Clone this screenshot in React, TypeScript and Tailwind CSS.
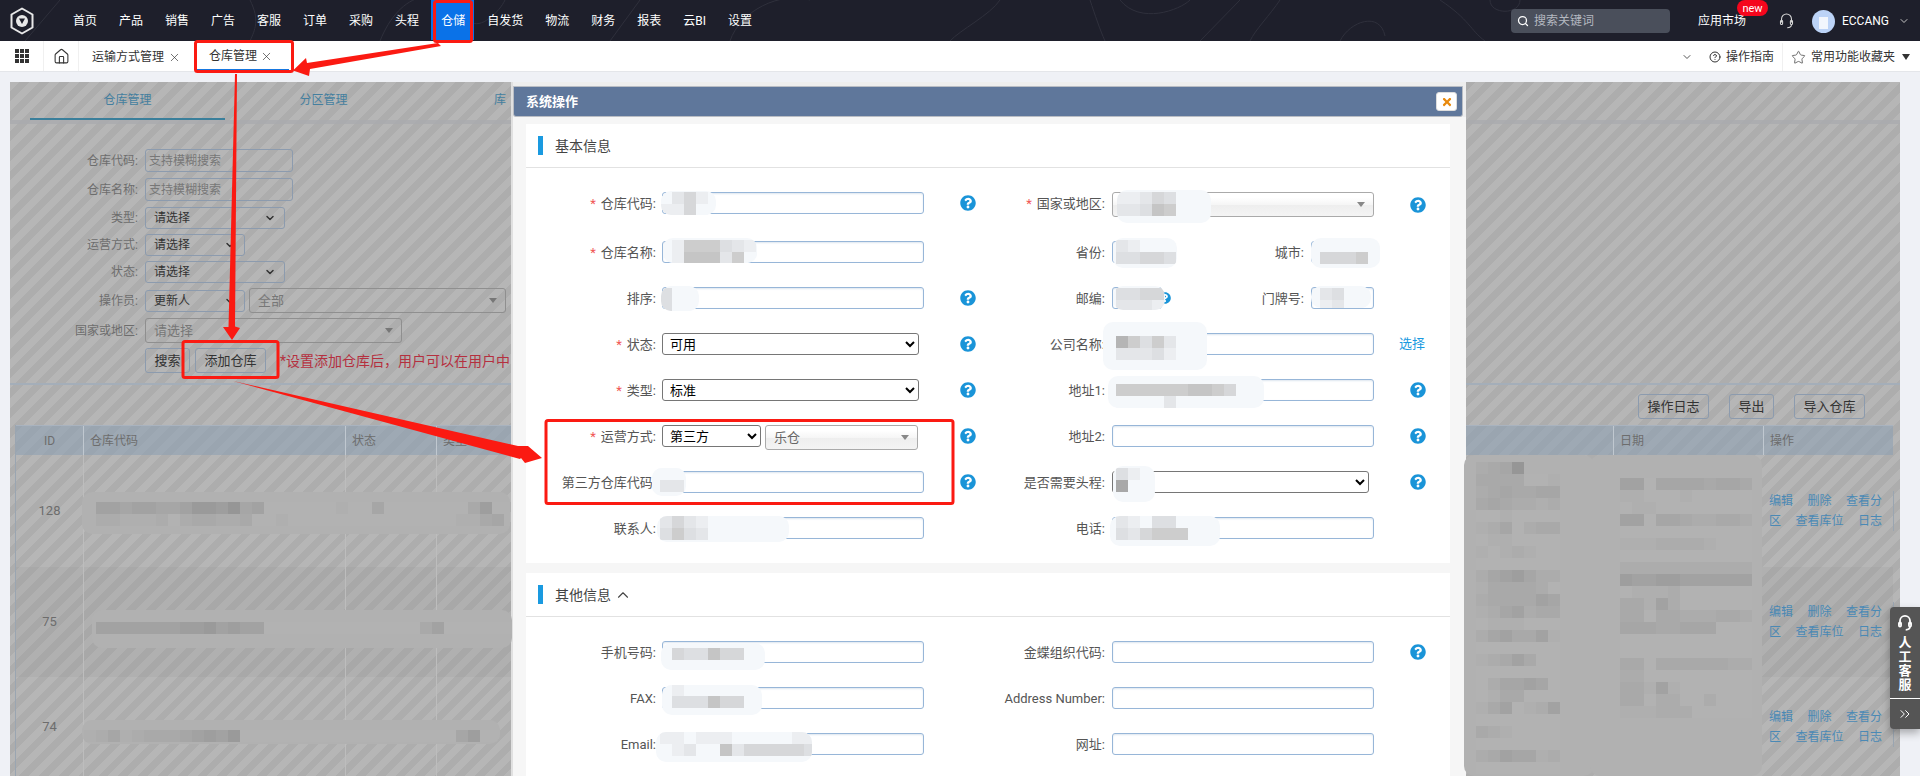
import { ChevronDown, ChevronUp, ChevronsRight, CircleHelp, Home, Search, Star, X } from "lucide-react";
import type { ReactNode } from "react";
import { FaQuestionCircle, FaTimes } from "react-icons/fa";

const navItems = ["首页", "产品", "销售", "广告", "客服", "订单", "采购", "头程", "仓储", "自发货", "物流", "财务", "报表", "云BI", "设置"];

const lightShades = ["#f5f8fb", "#eceef1", "#e4e6e9", "#dddfe2", "#d6d7d9", "#cdcdcd", "#c5c5c5", "#b5b5b5", "#a8a8a8"];
const darkShades = ["#b2b2b2", "#afafaf", "#acacac", "#a9a9a9", "#a6a6a6", "#a2a2a2", "#9e9e9e", "#9a9a9a", "#969696"];

type Patch = {
  x: number;
  y: number;
  w: number;
  h: number;
  base?: string;
  dark?: boolean;
  gridX: number;
  gridY: number;
  rows: string[];
};

// blurred out values, the cells sit on the 12px mosaic of the source picture
const patches: Patch[] = [
  { x: 661, y: 191, w: 55, h: 24, gridX: 660, gridY: 192, rows: ["0241", "1140."] },
  { x: 663, y: 238, w: 94, h: 25, gridX: 660, gridY: 240, rows: ["015553210", "016662500"] },
  { x: 661, y: 286, w: 38, h: 25, gridX: 660, gridY: 288, rows: ["300", "300"] },
  { x: 652, y: 468, w: 34, h: 28, gridX: 648, gridY: 468, rows: ["000", "022"] },
  { x: 657, y: 516, w: 132, h: 26, gridX: 660, gridY: 516, rows: ["2421", "3532"] },
  { x: 661, y: 643, w: 104, h: 27, gridX: 672, gridY: 648, rows: ["433644", "000000"] },
  { x: 662, y: 685, w: 100, h: 30, gridX: 660, gridY: 684, rows: ["01000", "033364400"] },
  { x: 656, y: 732, w: 156, h: 30, gridX: 660, gridY: 732, rows: ["1101110000011", "0120062444443"] },
  { x: 1117, y: 190, w: 94, h: 33, gridX: 1116, gridY: 192, rows: ["11243", "22365"] },
  { x: 1113, y: 238, w: 64, h: 30, gridX: 1116, gridY: 240, rows: ["21000", "33443"] },
  { x: 1311, y: 238, w: 69, h: 30, gridX: 1320, gridY: 240, rows: ["00000", "44450"] },
  { x: 1113, y: 286, w: 52, h: 24, gridX: 1116, gridY: 288, rows: ["3344", "2221"] },
  { x: 1311, y: 286, w: 60, h: 22, gridX: 1320, gridY: 288, rows: ["2300", "1200"] },
  { x: 1103, y: 322, w: 104, h: 48, gridX: 1116, gridY: 336, rows: ["75352", "22231"] },
  { x: 1108, y: 376, w: 156, h: 32, gridX: 1116, gridY: 384, rows: ["5555556654", "0000200000"] },
  { x: 1113, y: 466, w: 42, h: 36, gridX: 1116, gridY: 468, rows: ["31", "80"] },
  { x: 1110, y: 516, w: 110, h: 30, gridX: 1116, gridY: 516, rows: ["21033", "324555"] },
  { x: 82, y: 492, w: 428, h: 42, dark: true, gridX: 96, gridY: 502, rows: ["5545544577684500000010040000000360000000", "2211120233223001000000000000001134002"] },
  { x: 92, y: 610, w: 420, h: 38, dark: true, gridX: 96, gridY: 622, rows: ["55555556675655000000000000035000000355660"] },
  { x: 82, y: 720, w: 418, h: 24, dark: true, gridX: 84, gridY: 730, rows: ["1241233345657000000000000000000460000006784"] },
  {
    x: 1464, y: 455, w: 130, h: 321, dark: true, base: "#b1b1b1", gridX: 1476, gridY: 462,
    rows: ["2348", "3333001", "2343344", "3432212", "0010000", "1240233", "0110000", "1012100", "0000000", "2456422", "1333320", "2333354", "1245233", "0111000", "2453351", "0000000", "1235300", "0000000", "0244540", "0133000", "1350125", "0000000", "3210000", "0000000", "2354412", "0000000"],
  },
  {
    x: 1590, y: 455, w: 172, h: 321, dark: true, base: "#b1b1b1", gridX: 1620, gridY: 478,
    rows: ["55044443443", "11000100000", "01100000000", "55044322332", "00000000000", "11122221000", "00000000000", "22222222222", "65566555555", "01112000000", "33152000000", "33033222332", "44433444000", "00000000000", "00000000000", "33033333322", "22000000000", "33151000000", "33022002000", "11122200000"],
  },
];

function Patches() {
  return (
    <>
      {patches.map((patch, index) => (
        <div
          key={index}
          className="absolute overflow-hidden rounded-[10px]"
          style={{ left: patch.x, top: patch.y, width: patch.w, height: patch.h, background: patch.base ?? (patch.dark ? "#b1b1b1" : "#f5f8fb") }}
        >
          {patch.rows.map((row, rowIndex) =>
            row.split("").map((cell, cellIndex) => (
              <div
                key={`${rowIndex}-${cellIndex}`}
                className="absolute h-3 w-3"
                style={{
                  left: patch.gridX + cellIndex * 12 - patch.x,
                  top: patch.gridY + rowIndex * 12 - patch.y,
                  background: (patch.dark ? darkShades : lightShades)[Number(cell)],
                }}
              />
            )),
          )}
        </div>
      ))}
    </>
  );
}

function Logo() {
  return (
    <svg width="24" height="28" viewBox="0 0 24 28" fill="none">
      <path d="M12 1.500 22.500 7.500v13L12 26.500 1.500 20.500v-13z" stroke="#e8e8e8" strokeWidth="2" strokeLinejoin="round" />
      <circle cx="12" cy="14" r="6" fill="#e8e8e8" />
      <path d="M9 11.500h6l-3 5.500z" fill="#1e1f2b" />
    </svg>
  );
}

function Headset({ className, stroke = 2 }: { className: string; stroke?: number }) {
  return (
    <svg className={className} viewBox="0 0 24 28" fill="none" stroke="currentColor" strokeWidth={stroke}>
      <path d="M5 16v-5a7 7 0 0 1 14 0v5" />
      <rect x="3.500" y="13" width="3" height="6" rx="1.500" />
      <rect x="17.500" y="13" width="3" height="6" rx="1.500" />
      <path d="M19 19c0 3-2.500 4.500-6 4.500" />
    </svg>
  );
}

function TopBar() {
  return (
    <header className="relative flex h-[41px] shrink-0 items-center overflow-hidden bg-[#1e1f2b] pt-px text-xs text-white">
      <svg className="absolute left-0 top-0" width="1920" height="41" fill="none" stroke="#2f303c" strokeWidth="1">
        <path d="M60 0 25 41M250 0c10 20 5 30 0 41M380 41c20-50 60-60 90-20 10 10 30-10 35-21M640 0 610 41M730 41c10-30 50-50 80-41M1000 0c-10 15-40 30-50 41M1090 0c5 15 10 30 15 41M1120 0c20 25 60 10 70-0M1240 0l-40 41M1280 0c-10 15-25 30-30 41M1340 41c10-20 40-30 45-5M1440 0c30 20 30 30 45 41M1490 0c0 15 30 15 30 0" />
      </svg>
      <div className="relative ml-[10px]">
        <Logo />
      </div>
      <nav className="relative ml-[39px] flex h-full items-center gap-[22px]">
        {navItems.map((item) => (
          <span key={item} className={`relative ${item === "仓储" ? "z-0" : ""}`}>
            {item === "仓储" && <span className="absolute -left-[10px] -right-[9px] -top-[14px] -z-10 h-[41px] bg-[#0a72e8]" />}
            {item}
          </span>
        ))}
      </nav>
      <div className="relative ml-auto flex items-center">
        <div className="flex h-6 w-[159px] items-center gap-[5px] rounded-sm bg-[#4a4f5b] pl-[6px] text-[#b4b8c0]">
          <Search className="h-3 w-3 text-white" strokeWidth={2.5} />
          搜索关键词
        </div>
        <div className="relative ml-7 mr-[32px]">
          应用市场
          <span className="absolute -right-[22px] -top-[13px] flex h-4 w-[31px] items-center justify-center rounded-full bg-[#f5061d] text-[11px] leading-none">new</span>
        </div>
        <Headset className="h-[20px] w-[17px] text-[#d8d8d8]" stroke={1.5} />
        <div className="ml-[17px] flex h-[23px] w-[23px] items-end justify-center rounded-full bg-[#bcd3f7] pb-1">
          <div className="h-[12px] w-[9px] bg-white/80" />
        </div>
        <span className="ml-[7px]">ECCANG</span>
        <ChevronDown className="ml-[9px] mr-[10px] h-3 w-3 text-[#c4c4c4]" />
      </div>
    </header>
  );
}

function TabBar() {
  return (
    <div className="flex h-[31px] shrink-0 items-center border-b border-[#e4e6ea] bg-white text-xs text-[#333]">
      <div className="flex h-full w-[44px] items-center justify-center border-r border-[#f0f0f0]">
        <div className="grid grid-cols-3 gap-px">
          {Array.from({ length: 9 }).map((_, index) => (
            <span key={index} className="h-1 w-1 bg-[#333]" />
          ))}
        </div>
      </div>
      <div className="flex h-full w-[35px] items-center justify-center border-r border-[#f0f0f0]">
        <Home className="h-[17px] w-[17px]" strokeWidth={1.5} />
      </div>
      <span className="ml-[13px] pt-[2px]">运输方式管理</span>
      <X className="ml-[4px] mt-[2px] h-[13px] w-[13px]" strokeWidth={1.25} />
      <div className="ml-[16px] flex h-full w-[92px] items-center border-b-2 border-[#1677e0] pl-3 pt-[2px]">
        仓库管理
        <X className="ml-[3px] h-[13px] w-[13px]" strokeWidth={1.25} />
      </div>
      <div className="ml-auto flex h-full items-center pt-[2px]">
        <ChevronDown className="h-3 w-3 text-[#555]" />
        <CircleHelp className="ml-[16px] h-3 w-3" />
        <span className="ml-[5px]">操作指南</span>
        <div className="ml-2 flex h-full items-center border-l border-[#f0f0f0] pl-2">
          <Star className="h-[15px] w-[15px] text-[#666]" strokeWidth={1.5} />
          <span className="ml-[5px]">常用功能收藏夹</span>
          <span className="ml-[7px] mr-[10px] border-x-[4px] border-t-[6px] border-x-transparent border-t-[#333]" />
        </div>
      </div>
    </div>
  );
}

function Ghost({ className, children }: { className: string; children?: ReactNode }) {
  return <div className={`flex items-center rounded-[3px] border border-[#8c9bae] ${className}`}>{children}</div>;
}

function BackForm() {
  const rows: { label: string; mb: string; control: ReactNode }[] = [
    { label: "仓库代码:", mb: "mb-[6px]", control: <Ghost className="h-[23px] w-[148px] pl-[3px] text-[#777]">支持模糊搜索</Ghost> },
    { label: "仓库名称:", mb: "mb-[6px]", control: <Ghost className="h-[23px] w-[148px] pl-[3px] text-[#777]">支持模糊搜索</Ghost> },
    { label: "类型:", mb: "mb-[5px]", control: <Ghost className="h-[22px] w-[140px] justify-between px-2 text-[#333]">请选择<ChevronDown className="h-3 w-3" strokeWidth={3} /></Ghost> },
    { label: "运营方式:", mb: "mb-[5px]", control: <Ghost className="h-[22px] w-[100px] justify-between px-2 text-[#333]">请选择<ChevronDown className="h-3 w-3" strokeWidth={3} /></Ghost> },
    { label: "状态:", mb: "mb-[5px]", control: <Ghost className="h-[22px] w-[140px] justify-between px-2 text-[#333]">请选择<ChevronDown className="h-3 w-3" strokeWidth={3} /></Ghost> },
    {
      label: "操作员:",
      mb: "mb-[5px]",
      control: (
        <div className="flex items-center gap-1">
          <Ghost className="h-[22px] w-[100px] justify-between px-2 text-[#333]">更新人<ChevronDown className="h-3 w-3" strokeWidth={3} /></Ghost>
          <Ghost className="h-[25px] w-[257px] justify-between border-[#8f8f8f] px-2 text-[13px] text-[#777]">全部<span className="border-x-[4px] border-t-[5px] border-x-transparent border-t-[#777]" /></Ghost>
        </div>
      ),
    },
    {
      label: "国家或地区:",
      mb: "mb-[5px]",
      control: <Ghost className="h-[25px] w-[257px] justify-between border-[#8f8f8f] px-2 text-[13px] text-[#777]">请选择<span className="border-x-[4px] border-t-[5px] border-x-transparent border-t-[#777]" /></Ghost>,
    },
  ];

  return (
    <div className="mt-[25px] text-xs">
      {rows.map((row) => (
        <div key={row.label} className={`flex items-center ${row.mb}`}>
          <span className="mr-[7px] w-[128px] text-right text-[#6d6d6d]">{row.label}</span>
          {row.control}
        </div>
      ))}
      <div className="ml-[135px] flex h-[25px] items-center text-[13px]">
        <Ghost className="h-[25px] w-[45px] justify-center border-[#8a8a8a] text-[#333]">搜索</Ghost>
        <Ghost className="ml-[5px] h-[25px] w-[71px] justify-center border-[#8a8a8a] text-[#333]">添加仓库</Ghost>
        <span className="ml-[14px] whitespace-nowrap text-sm text-[#b5303f]">*设置添加仓库后，用户可以在用户中</span>
      </div>
    </div>
  );
}

const columns = "grid grid-cols-[67px_262px_91px_1177px_150px_131px]";

function BackTable() {
  const rows = [
    { id: "128", height: "h-[112px]", bg: "" },
    { id: "75", height: "h-[110px]", bg: "bg-[#7d7d7d]/10" },
    { id: "74", height: "h-[99px]", bg: "" },
  ];
  return (
    <div className="ml-[5px] mt-[6px] w-[1878px] border-l border-[#9aa5b1] text-xs text-[#6d6d6d]">
      <div className={`${columns} h-[30px] items-center border-t border-[#a9b3bf] bg-[#8ea0b3]/60`}>
        <span className="text-center">ID</span>
        <span className="flex h-full items-center border-l border-[#c0c8d0] pl-[6px]">仓库代码</span>
        <span className="flex h-full items-center border-l border-[#c0c8d0] pl-[6px]">状态</span>
        <span className="flex h-full items-center border-l border-[#c0c8d0] pl-[6px]">类型</span>
        <span className="flex h-full items-center border-l border-[#c0c8d0] pl-[6px]">日期</span>
        <span className="flex h-full items-center border-l border-[#c0c8d0] pl-[6px]">操作</span>
      </div>
      {rows.map((row) => (
        <div key={row.id} className={`${columns} ${row.height} ${row.bg} items-center`}>
          <span className="text-center text-[13px]">{row.id}</span>
          <span className="h-full border-l border-[#bdbdbd]" />
          <span className="h-full border-l border-[#bdbdbd]" />
          <span className="h-full border-l border-[#bdbdbd]" />
          <span className="h-full" />
          <div className="border-r border-[#9aa5b1] pl-[6px] leading-5 text-[#4a89b5]">
            <div className="flex w-[113px] justify-between">
              <span>编辑</span>
              <span>删除</span>
              <span>查看分</span>
            </div>
            <div className="flex w-[113px] justify-between">
              <span>区</span>
              <span>查看库位</span>
              <span>日志</span>
            </div>
          </div>
        </div>
      ))}
    </div>
  );
}

function BackPage() {
  return (
    <div className="ml-[10px] mr-[20px] mt-[10px] flex-1 bg-[repeating-linear-gradient(135deg,#b6b6b6_0,#b6b6b6_7px,#adadad_7px,#adadad_14px)]">
      <div className="flex h-[42px] items-start border-b-[4px] border-[#a8a9ae]/70 text-xs text-[#447f9f]">
        <div className="ml-[20px] flex h-[38px] w-[195px] items-center justify-center border-b-2 border-[#3a7f9b]">仓库管理</div>
        <div className="ml-[1px] flex h-[36px] w-[195px] items-center justify-center">分区管理</div>
        <div className="ml-[1px] flex h-[36px] items-center pl-[72px]">库</div>
      </div>
      <BackForm />
      <div className="mt-[10px] h-[2px] bg-[#a4aeb9]" />
      <div className="mr-[35px] mt-[9px] flex justify-end gap-5 text-[13px] text-[#333]">
        <Ghost className="h-[25px] w-[71px] justify-center border-[#8a8a8a]">操作日志</Ghost>
        <Ghost className="h-[25px] w-[45px] justify-center border-[#8a8a8a]">导出</Ghost>
        <Ghost className="h-[25px] w-[71px] justify-center border-[#8a8a8a]">导入仓库</Ghost>
      </div>
      <BackTable />
    </div>
  );
}

function TextBox({ width = "w-[262px]" }: { width?: string }) {
  return <input type="text" readOnly className={`h-[22px] ${width} rounded-[3px] border border-[#97b6d8] bg-white shadow-[inset_0_1px_2px_#dde6ef]`} />;
}

function NativeSelect({ width, value, options }: { width: string; value: string; options: string[] }) {
  return (
    <select defaultValue={value} className={`h-[22px] ${width} rounded-[3px] border border-[#767676] bg-white pl-[3px] text-[13px] text-black`}>
      {options.map((option) => (
        <option key={option}>{option}</option>
      ))}
    </select>
  );
}

function ChosenBox({ width, label }: { width: string; label?: string }) {
  return (
    <div className={`flex h-[25px] ${width} items-center justify-between rounded-[3px] border border-[#aaa] bg-[linear-gradient(#fff_20%,#f6f6f6_50%,#eee_52%,#f4f4f4)] px-[8px] text-[13px] text-[#666]`}>
      <span>{label}</span>
      <span className="border-x-[4px] border-t-[5px] border-x-transparent border-t-[#888]" />
    </div>
  );
}

function HelpIcon() {
  return <FaQuestionCircle className="h-4 w-4 shrink-0 text-[#1a94d8]" />;
}

type FieldProps = {
  label: string;
  required?: boolean;
  right?: boolean;
  height?: string;
  help?: boolean;
  helpBox?: string;
  end?: ReactNode;
  children: ReactNode;
};

function Field({ label, required, right, height = "h-[46px]", help, helpBox = "h-[22px]", end, children }: FieldProps) {
  return (
    <div className={`flex items-start ${height}`}>
      <label className={`flex h-[22px] shrink-0 items-center justify-end pt-px text-[13px] text-[#555] ${right ? "mr-[7px] w-[129px]" : "mr-[6px] w-[130px]"}`}>
        {required && <span className="mr-[5px] text-[#f05555]">*</span>}
        {label}
      </label>
      <div className="flex w-[298px] shrink-0 items-start gap-1">{children}</div>
      {help && (
        <div className={`flex items-center ${helpBox}`}>
          <HelpIcon />
        </div>
      )}
      {end}
    </div>
  );
}

function PairedBox({ width, label, help }: { width: string; label: string; help?: boolean }) {
  return (
    <div className="flex w-[262px] items-center justify-between">
      <div className="flex items-center">
        <TextBox width={width} />
        {help && <FaQuestionCircle className="-ml-[3px] h-3 w-3 text-[#1a94d8]" />}
      </div>
      <div className="flex items-center gap-[7px]">
        <span className="pt-px text-[13px] text-[#555]">{label}</span>
        <TextBox width="w-[63px]" />
      </div>
    </div>
  );
}

function CardHeader({ title, collapse }: { title: string; collapse?: boolean }) {
  return (
    <div className="flex h-[44px] items-center border-b border-[#e2e2e2] pl-3">
      <span className="h-[19px] w-[5px] bg-[#1a9ae0]" />
      <span className="ml-3 text-sm text-[#444]">{title}</span>
      {collapse && <ChevronUp className="ml-[3px] h-[18px] w-[18px] text-[#444]" strokeWidth={1.5} />}
    </div>
  );
}

function Modal() {
  return (
    <div className="absolute left-[511px] top-[82px] h-[694px] w-[955px] overflow-hidden border-l-2 border-[#e0e0e0] bg-[#eee] pt-1">
      <div className="flex h-[31px] w-[950px] items-center justify-between rounded-b-[3px] border border-[#b9bdc4] bg-[#5f779b] pl-3 pr-[5px] text-[13px] font-bold text-white">
        系统操作
        <span className="flex h-[19px] w-[21px] items-center justify-center rounded-[3px] border border-[#ddd] bg-white">
          <FaTimes className="h-3 w-3 text-[#e8890c]" />
        </span>
      </div>
      <div className="bg-[#f6f6f6] pl-[13px] pt-[7px]">
        <section className="h-[439px] w-[924px] bg-white">
          <CardHeader title="基本信息" />
          <div className="grid grid-cols-[450px_474px] pt-6">
            <div>
              <Field label="仓库代码:" required help height="h-[49px]"><TextBox /></Field>
              <Field label="仓库名称:" required><TextBox /></Field>
              <Field label="排序:" help><TextBox /></Field>
              <Field label="状态:" required help><NativeSelect width="w-[257px]" value="可用" options={["可用", "停用"]} /></Field>
              <Field label="类型:" required help><NativeSelect width="w-[257px]" value="标准" options={["标准", "中转"]} /></Field>
              <Field label="运营方式:" required help>
                <NativeSelect width="w-[99px]" value="第三方" options={["第三方", "自营"]} />
                <ChosenBox width="w-[153px]" label="乐仓" />
              </Field>
              <Field label="第三方仓库代码:" help><TextBox /></Field>
              <Field label="联系人:"><TextBox /></Field>
            </div>
            <div>
              <Field label="国家或地区:" required right help helpBox="h-[26px]" height="h-[49px]"><ChosenBox width="w-[262px]" /></Field>
              <Field label="省份:" right><PairedBox width="w-[63px]" label="城市:" /></Field>
              <Field label="邮编:" right><PairedBox width="w-[50px]" label="门牌号:" help /></Field>
              <Field label="公司名称:" right end={<span className="-ml-[11px] flex h-[22px] items-center text-[13px] text-[#1a9ae0]">选择</span>}>
                <TextBox />
              </Field>
              <Field label="地址1:" right help><TextBox /></Field>
              <Field label="地址2:" right help><TextBox /></Field>
              <Field label="是否需要头程:" right help><NativeSelect width="w-[257px]" value="" options={["", "是", "否"]} /></Field>
              <Field label="电话:" right><TextBox /></Field>
            </div>
          </div>
        </section>
        <section className="mt-[10px] h-[300px] w-[924px] bg-white">
          <CardHeader title="其他信息" collapse />
          <div className="grid grid-cols-[450px_474px] pt-6">
            <div>
              <Field label="手机号码:"><TextBox /></Field>
              <Field label="FAX:"><TextBox /></Field>
              <Field label="Email:"><TextBox /></Field>
            </div>
            <div>
              <Field label="金蝶组织代码:" right help><TextBox /></Field>
              <Field label="Address Number:" right><TextBox /></Field>
              <Field label="网址:" right><TextBox /></Field>
            </div>
          </div>
        </section>
      </div>
    </div>
  );
}

function SideWidget() {
  return (
    <div className="absolute right-0 top-[607px] flex w-[30px] flex-col items-center rounded-l-[4px] bg-[#555] text-white shadow-[0_4px_8px_rgba(0,0,0,0.3)]">
      <div className="flex h-[92px] w-full flex-col items-center border-b border-white pt-[6px] text-[13px] font-bold leading-[14px]">
        <Headset className="mb-[3px] h-[20px] w-[18px]" stroke={2.5} />
        <span>人</span>
        <span>工</span>
        <span>客</span>
        <span>服</span>
      </div>
      <div className="flex h-[30px] items-center">
        <ChevronsRight className="h-4 w-4" strokeWidth={1.5} />
      </div>
    </div>
  );
}

// red marks the author of the picture put on top of the page
function Annotations() {
  return (
    <svg className="absolute left-0 top-0" width="1920" height="776" fill="none">
      <g stroke="#fb1a12" strokeWidth="3">
        <rect x="434.500" y="1.500" width="37" height="40" rx="2" />
        <rect x="195.500" y="41.500" width="97" height="30" rx="2" />
        <rect x="183" y="341.500" width="95" height="36" rx="2" />
        <rect x="546" y="420.500" width="407" height="83" rx="2" />
      </g>
      <g fill="#fb1a12">
        <path d="M293 70.500 306 58 307 63 438 43 441 46 310 69 309 76z" />
        <path d="M235 74h2L235 326.500 240 328 232 340 223 327 228.500 327z" />
        <path d="M233 381 518 446 528 446 542 458 525 463 521 458 520 459z" />
      </g>
    </svg>
  );
}

export default function App() {
  return (
    <div className="relative flex h-[776px] w-[1920px] flex-col overflow-hidden bg-[#eff1f6] font-['Roboto','Noto_Sans_CJK_SC',sans-serif]">
      <TopBar />
      <TabBar />
      <BackPage />
      <Modal />
      <Patches />
      <SideWidget />
      <Annotations />
    </div>
  );
}
